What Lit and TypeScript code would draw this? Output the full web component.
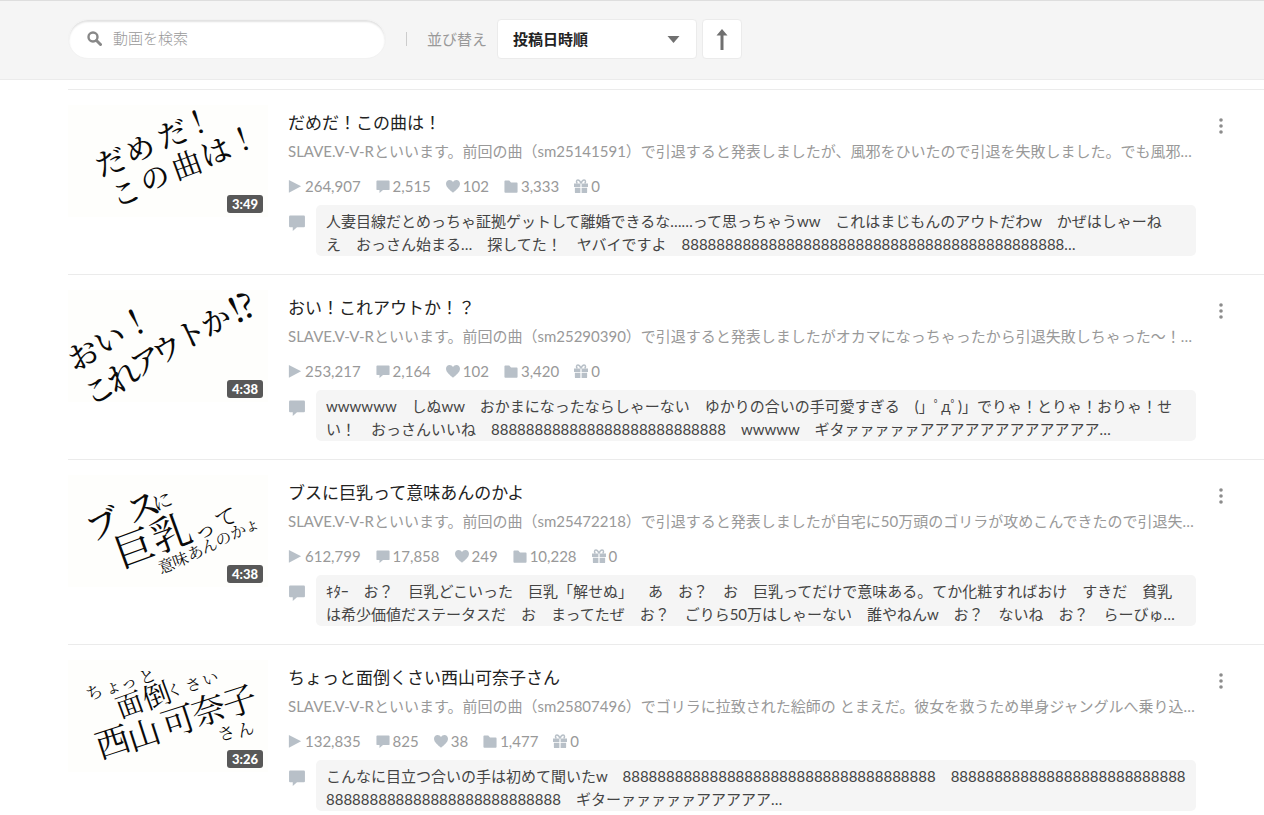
import { LitElement, html, css, svg } from "lit";
import { customElement, property } from "lit/decorators.js";

interface Glyphs { x: number; y: number; size: number; angle: number; text: string; heavy?: boolean }
interface Video {
  title: string; desc: string; time: string; comments: string[];
  stats: string[]; art: Glyphs[];
}

const g = (text: string, x: number, y: number, size: number, angle = -20, heavy = false): Glyphs =>
  ({ text, x, y, size, angle, heavy });

const e = (n: number) => "8".repeat(n);

const videos: Video[] = [
  {
    title: "だめだ！この曲は！",
    desc: "SLAVE.V-V-Rといいます。前回の曲（sm25141591）で引退すると発表しましたが、風邪をひいたので引退を失敗しました。でも風邪…",
    time: "3:49",
    stats: ["264,907", "2,515", "102", "3,333", "0"],
    comments: [
      "人妻目線だとめっちゃ証拠ゲットして離婚できるな……って思っちゃうww　これはまじもんのアウトだわw　かぜはしゃーね",
      `え　おっさん始まる…　探してた！　ヤバイですよ　${e(44)}…`,
    ],
    art: [g("だ", 42, 55, 30, -20, true), g("め", 71, 42, 29, -20, true), g("だ", 104, 27, 30, -20, true), g("！", 129, 15, 31, -20, true),
      g("こ", 57, 86, 29, -20, true), g("の", 86, 71, 29, -20, true), g("曲", 118, 58, 30), g("は", 147, 45, 30, -20, true), g("！", 174, 32, 31, -20, true)],
  },
  {
    title: "おい！これアウトか！？",
    desc: "SLAVE.V-V-Rといいます。前回の曲（sm25290390）で引退すると発表しましたがオカマになっちゃったから引退失敗しちゃった〜！…",
    time: "4:38",
    stats: ["253,217", "2,164", "102", "3,420", "0"],
    comments: [
      "wwwwww　しぬww　おかまになったならしゃーない　ゆかりの合いの手可愛すぎる　(」ﾟдﾟ)」でりゃ！とりゃ！おりゃ！せ",
      `い！　おっさんいいね　${e(27)}　wwwww　ギタァァァァァアアアアアアアアアアアア…`,
    ],
    art: [g("お", 14, 63, 31, -26, true), g("い", 41, 47, 31, -26, true), g("！", 67, 30, 34, -26, true),
      g("こ", 30, 98, 30, -30, true), g("れ", 54, 84, 33, -30, true), g("ア", 77, 69, 31, -26, true), g("ウ", 98, 57, 30, -26, true),
      g("ト", 122, 42, 31, -26, true), g("か", 147, 29, 30, -26, true), g("⁉", 173, 15, 35, -26, true)],
  },
  {
    title: "ブスに巨乳って意味あんのかよ",
    desc: "SLAVE.V-V-Rといいます。前回の曲（sm25472218）で引退すると発表しましたが自宅に50万頭のゴリラが攻めこんできたので引退失…",
    time: "4:38",
    stats: ["612,799", "17,858", "249", "10,228", "0"],
    comments: [
      "ｷﾀｰ　お？　巨乳どこいった　巨乳「解せぬ」　あ　お？　お　巨乳ってだけで意味ある。てか化粧すればおけ　すきだ　貧乳",
      "は希少価値だステータスだ　お　まってたぜ　お？　ごりら50万はしゃーない　誰やねんw　お？　ないね　お？　らーびゅ…",
    ],
    art: [g("ブ", 34, 47, 34, -22, true), g("ス", 74, 30, 34, -22, true), g("に", 94, 25, 20), g("巨", 65, 70, 40), g("乳", 102, 55, 40),
      g("っ", 136, 53, 22), g("て", 157, 41, 22), g("意", 98, 90, 16), g("味", 112, 84, 16), g("あ", 127, 77, 16),
      g("ん", 141, 70, 16), g("の", 155, 63, 16), g("か", 170, 56, 16), g("ょ", 183, 49, 16)],
  },
  {
    title: "ちょっと面倒くさい西山可奈子さん",
    desc: "SLAVE.V-V-Rといいます。前回の曲（sm25807496）でゴリラに拉致された絵師の とまえだ。彼女を救うため単身ジャングルへ乗り込…",
    time: "3:26",
    stats: ["132,835", "825", "38", "1,477", "0"],
    comments: [
      `こんなに目立つ合いの手は初めて聞いたw　${e(36)}　${e(27)}`,
      `${e(27)}　ギターァァァァァアアアアア…`,
    ],
    art: [g("ち", 26, 31, 17), g("ょ", 44, 25, 17), g("っ", 60, 21, 17), g("と", 79, 15, 17),
      g("面", 61, 43, 27), g("倒", 88, 34, 28), g("く", 106, 29, 15), g("さ", 125, 24, 16), g("い", 142, 18, 16),
      g("西", 44, 80, 34, -18), g("山", 75, 72, 33, -18), g("可", 110, 59, 34, -18), g("奈", 140, 48, 34, -18), g("子", 171, 39, 34, -18),
      g("さ", 158, 72, 17), g("ん", 177, 68, 17)],
  },
];

const bubble = svg`<path d="M1.5 1.5h13a1 1 0 0 1 1 1v9a1 1 0 0 1-1 1H8L4 16v-3.500H1.500a1 1 0 0 1-1-1v-9a1 1 0 0 1 1-1z"/>`;
const icons = [
  { label: "再生", shape: svg`<path d="M1 1v14.500L15 8.300z"/>` },
  { label: "コメント", shape: bubble },
  { label: "いいね", shape: svg`<path d="M8 15.500C5 13 0 9.500 0 5.300 0 2.900 1.800 1 4.100 1 5.700 1 7.200 1.900 8 3.400 8.800 1.900 10.300 1 11.900 1 14.200 1 16 2.900 16 5.300 16 9.500 11 13 8 15.500z"/>` },
  { label: "マイリスト", shape: svg`<path d="M1.500 1.500H6L8 4h6.500a1 1 0 0 1 1 1v9.500a1 1 0 0 1-1 1h-13a1 1 0 0 1-1-1v-12a1 1 0 0 1 1-1z"/>` },
  { label: "ギフト", shape: svg`<path d="M0 5h7.300v4H0zM8.700 5H16v4H8.700zM1 10h6.300v6H2a1 1 0 0 1-1-1zM8.700 10H15v5a1 1 0 0 1-1 1H8.700z"/><path fill="none" stroke="currentColor" stroke-width="1.700" d="M8 5C7 2 5.600 1 4.400 1 2.600 1 2.300 3.600 3.800 5M8 5c1-3 2.400-4 3.600-4 1.800 0 2.100 2.600.600 4"/>` },
];

@customElement("video-row")
class VideoRow extends LitElement {
  @property({ attribute: false }) video!: Video;

  static styles = css`
    :host { display: block; }
    .row { display: flex; align-items: flex-start; padding: 15px 31px 18px 0; border-top: 1px solid #ebebeb; }
    .thumb { position: relative; flex: none; display: block; width: 200px; height: 112px; margin-right: 20px; background: #fefefc; }
    .art { display: block; width: 100%; height: 100%; overflow: visible; }
    .art text { font-family: "Noto Serif CJK JP", "Noto Sans CJK JP", serif; font-weight: 400; fill: #0a0a0a; text-anchor: middle; dominant-baseline: central; }
    .art .heavy { font-weight: 500; }
    .time { position: absolute; right: 5px; bottom: 4px; padding: 0 5px; border-radius: 3px; background: #585858; color: #fff; font-size: 13px; font-weight: 900; line-height: 18px; }
    .body { flex: 1; min-width: 0; margin-right: 13px; }
    h2 { margin: 0; padding-top: 1px; font-size: 17px; font-weight: 400; line-height: 34px; }
    h2 a { color: #222; text-decoration: none; }
    .desc { margin: 0; color: #999; line-height: 23px; white-space: nowrap; overflow: hidden; text-overflow: ellipsis; }
    .stats { display: flex; gap: 15px; margin: 11px 0 7px; padding: 0; list-style: none; color: #999; line-height: 24px; }
    .stats li { display: flex; align-items: center; gap: 3px; }
    .icon { width: 14px; height: 15px; fill: #b8c0c8; color: #b8c0c8; }
    .talk { display: flex; align-items: flex-start; gap: 10px; }
    .big { width: 18px; height: 18px; margin-top: 9px; fill: #b8c0c8; }
    .lines { flex: 1; margin: 0; padding: 5px 10px 0; border-radius: 5px; background: #f5f5f5; color: #444; line-height: 23px; word-break: break-all; }
    .menu { display: flex; justify-content: center; width: 24px; padding: 13px 0; border: 0; background: none; cursor: pointer; }
    .menu svg { width: 4px; height: 16px; fill: #8c8c8c; }
  `;

  render() {
    const v = this.video;
    return html`
      <article class="row">
        <a class="thumb" href="#" aria-label=${v.title}>
          <svg class="art" viewBox="0 0 200 112">
            ${v.art.map((a) => svg`<text class=${a.heavy ? "heavy" : ""} x=${a.x} y=${a.y} font-size=${a.size} transform="rotate(${a.angle} ${a.x} ${a.y})">${a.text}</text>`)}
          </svg>
          <span class="time">${v.time}</span>
        </a>
        <div class="body">
          <h2><a href="#">${v.title}</a></h2>
          <p class="desc">${v.desc}</p>
          <ul class="stats">
            ${v.stats.map((s, i) => html`<li><svg class="icon" viewBox="0 0 16 17" role="img" aria-label=${icons[i].label}>${icons[i].shape}</svg><span>${s}</span></li>`)}
          </ul>
          <div class="talk">
            <svg class="big" viewBox="0 0 16 17" aria-hidden="true">${bubble}</svg>
            <p class="lines">${v.comments[0]}<br />${v.comments[1]}</p>
          </div>
        </div>
        <button class="menu" aria-label="メニュー">
          <svg viewBox="0 0 4 16"><circle cx="2" cy="2" r="1.800"/><circle cx="2" cy="8" r="1.800"/><circle cx="2" cy="14" r="1.800"/></svg>
        </button>
      </article>`;
  }
}

@customElement("app-root")
class AppRoot extends LitElement {
  static styles = css`
    :host { display: block; height: 100vh; overflow: hidden; background: #fff; color: #222; font: 15px/24px Lato, "Noto Sans CJK JP", sans-serif; text-spacing-trim: space-all; }
    .bar { display: flex; align-items: center; padding: 18px 68px 20px; border-top: 1px solid #dedede; border-bottom: 1px solid #ebebeb; background: #f5f5f5; }
    .search { display: flex; align-items: center; box-sizing: border-box; width: 318px; height: 40px; padding: 0 18px 2px; border-radius: 20px; background: #fff; border: 1px solid #f2f2f2; box-shadow: inset 0 2px 2px #e2e2e2; }
    .search svg { flex: none; width: 15px; height: 15px; margin-right: 11px; }
    .search input { flex: 1; min-width: 0; padding: 0; border: 0; outline: 0; background: none; font: inherit; font-weight: 300; }
    .search input::placeholder { color: #999; opacity: 1; }
    .rule { width: 1px; height: 14px; margin: 0 20px; background: #ccc; }
    .label { margin-right: 10px; color: #999; }
    .picker { position: relative; width: 200px; height: 40px; margin-right: 5px; }
    select, .order { box-sizing: border-box; height: 40px; border: 1px solid #ebebeb; border-radius: 4px; background: #fff; }
    select { appearance: none; width: 100%; padding: 0 40px 0 15px; color: #222; font: inherit; font-weight: 700; }
    .caret { position: absolute; right: 17px; top: 17px; width: 13px; height: 7px; pointer-events: none; }
    .order { display: grid; place-items: center; width: 40px; padding: 0; }
    .list { margin: 9px 0 0 68px; }
  `;

  render() {
    return html`
      <header class="bar">
        <label class="search">
          <svg viewBox="0 0 15 15" fill="none" stroke="#888"><circle cx="6" cy="6" r="4.500" stroke-width="2.400"/><path d="M9.500 9.500l4 4" stroke-width="3" stroke-linecap="round"/></svg>
          <input type="search" placeholder="動画を検索" aria-label="動画を検索" />
        </label>
        <span class="rule"></span>
        <label class="label" for="sort">並び替え</label>
        <span class="picker">
          <select id="sort"><option>投稿日時順</option></select>
          <svg class="caret" viewBox="0 0 13 7" fill="#707070"><path d="M.500 0h12L6.500 7z"/></svg>
        </span>
        <button class="order" aria-label="昇順">
          <svg width="12" height="21" viewBox="0 0 12 21" fill="#707070"><path d="M6 0l5.500 6.500H7.500V21h-3V6.500H.500z"/></svg>
        </button>
      </header>
      <main class="list">${videos.map((v) => html`<video-row .video=${v}></video-row>`)}</main>`;
  }
}
